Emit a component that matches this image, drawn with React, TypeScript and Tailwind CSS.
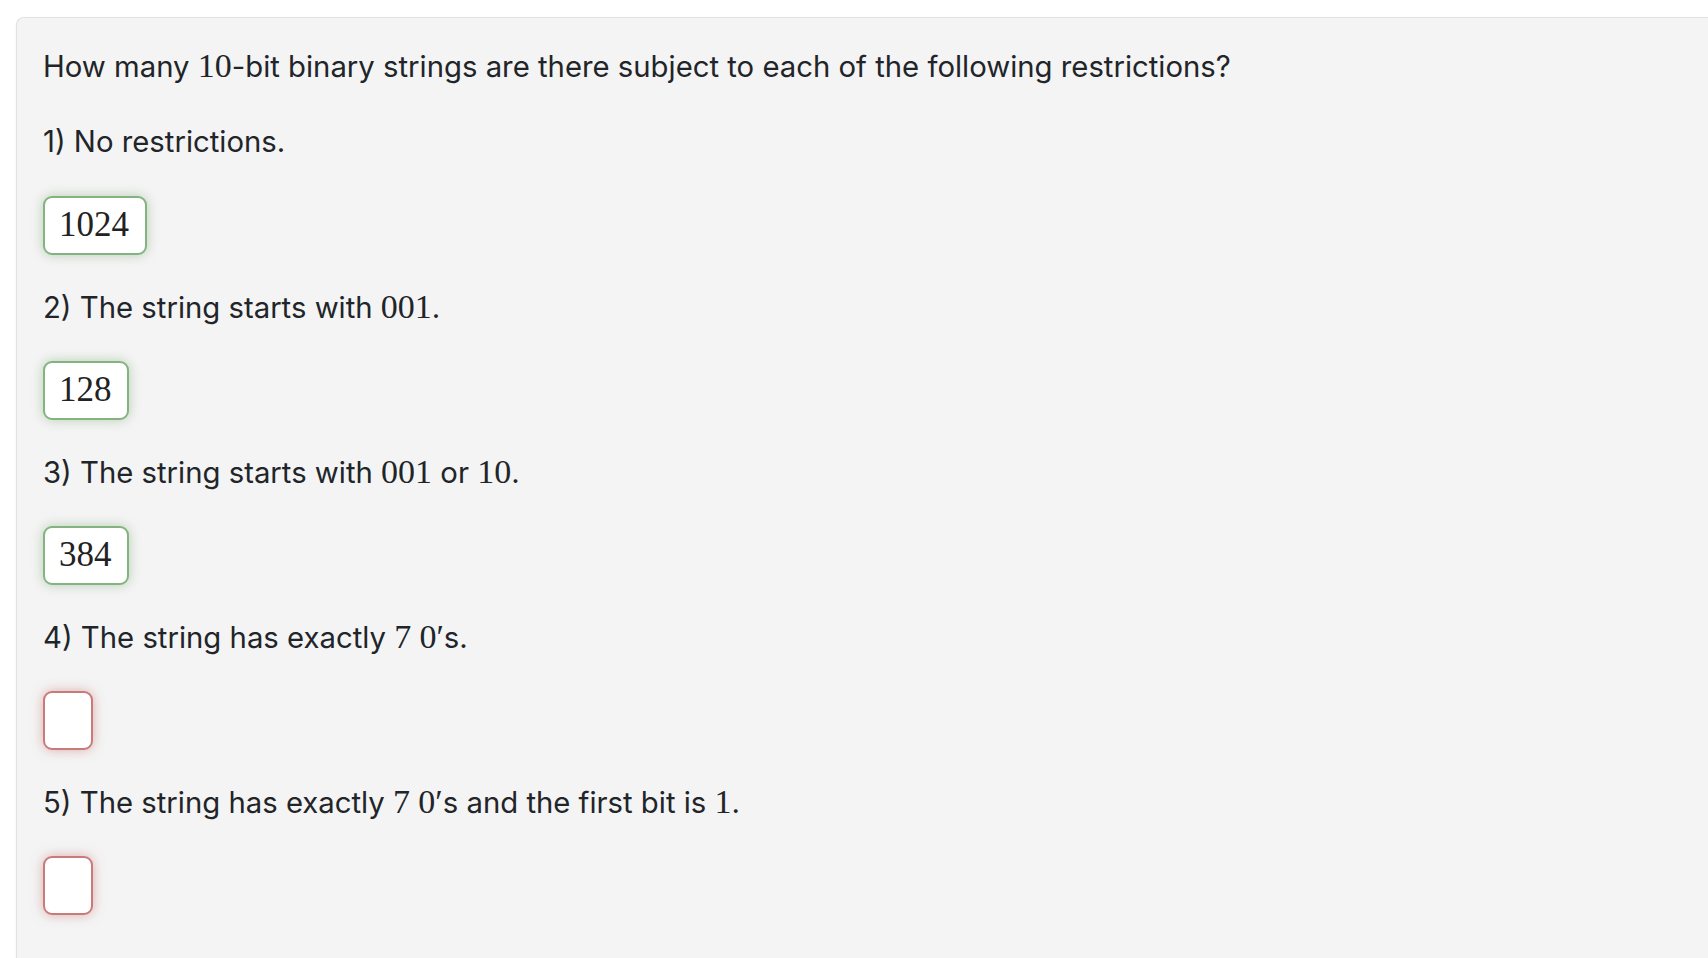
import React from "react";

type Part = string | { m: string };

interface Question {
  id: number;
  parts: Part[];
  answer: string;
  correct: boolean;
  width: string;
}

const questions: Question[] = [
  { id: 1, parts: ["1) No restrictions."], answer: "1024", correct: true, width: "w-[104px]" },
  { id: 2, parts: ["2) The string starts with ", { m: "001" }, "."], answer: "128", correct: true, width: "w-[86px]" },
  { id: 3, parts: ["3) The string starts with ", { m: "001" }, " or ", { m: "10" }, "."], answer: "384", correct: true, width: "w-[86px]" },
  { id: 4, parts: ["4) The string has exactly ", { m: "7" }, " ", { m: "0′" }, "s."], answer: "", correct: false, width: "w-[50px]" },
  { id: 5, parts: ["5) The string has exactly ", { m: "7" }, " ", { m: "0′" }, "s and the first bit is ", { m: "1" }, "."], answer: "", correct: false, width: "w-[50px]" },
];

function Math({ children }: { children: string }) {
  return <span className="font-['Liberation_Serif',serif] text-[34px]">{children}</span>;
}

function Line({ parts }: { parts: Part[] }) {
  return (
    <p className="h-[45px] leading-[41px] whitespace-nowrap">
      {parts.map((p, i) => (typeof p === "string" ? <span key={i}>{p}</span> : <Math key={i}>{p.m}</Math>))}
    </p>
  );
}

function AnswerBox({ q }: { q: Question }) {
  const tone = q.correct
    ? "border-[#83b480] shadow-[0_0_12px_rgba(110,160,100,0.45)]"
    : "border-[#c97b79] shadow-[0_0_12px_rgba(200,110,110,0.5)]";
  return (
    <div
      className={`h-[59px] ${q.width} rounded-[9px] border-2 bg-white flex items-center px-[14px] font-['Liberation_Serif',serif] text-[35px] text-[#222] ${tone}`}
    >
      {q.answer}
    </div>
  );
}

export default function App() {
  return (
    <div className="min-h-[958px] bg-white pt-[17px] pl-[16px] overflow-hidden">
      <div className="min-h-[941px] bg-[#f4f4f4] border-t border-l border-[#e2e2e2] rounded-tl-[8px] shadow-[0_1px_3px_rgba(0,0,0,0.06)] pt-[27px] pl-[26px] text-[#212529] text-[29.3px] font-['Inter','Liberation_Sans',sans-serif] flex flex-col gap-[30.5px]">
        <Line parts={["How many ", { m: "10" }, "-bit binary strings are there subject to each of the following restrictions?"]} />
        {questions.map((q) => (
          <React.Fragment key={q.id}>
            <Line parts={q.parts} />
            <AnswerBox q={q} />
          </React.Fragment>
        ))}
      </div>
    </div>
  );
}
